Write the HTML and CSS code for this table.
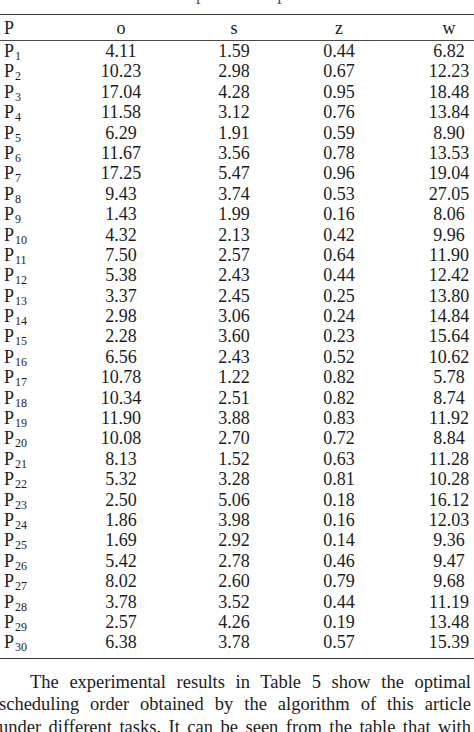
FILE: index.html
```html
<!DOCTYPE html>
<html>
<head>
<meta charset="utf-8">
<link rel="stylesheet" href="styles.css">
</head>
<body>
<div class="caption"><div class="caption-line">Table 4: Experimental parameters.</div></div>
<div class="table">
  <div class="row head"><div class="c0">P</div><div>o</div><div>s</div><div>z</div><div class="c4">w</div></div>
  <div class="body">
    <div class="row"><div class="c0">P<sub>1</sub></div><div>4.11</div><div>1.59</div><div>0.44</div><div class="c4">6.82</div></div>
    <div class="row"><div class="c0">P<sub>2</sub></div><div>10.23</div><div>2.98</div><div>0.67</div><div class="c4">12.23</div></div>
    <div class="row"><div class="c0">P<sub>3</sub></div><div>17.04</div><div>4.28</div><div>0.95</div><div class="c4">18.48</div></div>
    <div class="row"><div class="c0">P<sub>4</sub></div><div>11.58</div><div>3.12</div><div>0.76</div><div class="c4">13.84</div></div>
    <div class="row"><div class="c0">P<sub>5</sub></div><div>6.29</div><div>1.91</div><div>0.59</div><div class="c4">8.90</div></div>
    <div class="row"><div class="c0">P<sub>6</sub></div><div>11.67</div><div>3.56</div><div>0.78</div><div class="c4">13.53</div></div>
    <div class="row"><div class="c0">P<sub>7</sub></div><div>17.25</div><div>5.47</div><div>0.96</div><div class="c4">19.04</div></div>
    <div class="row"><div class="c0">P<sub>8</sub></div><div>9.43</div><div>3.74</div><div>0.53</div><div class="c4">27.05</div></div>
    <div class="row"><div class="c0">P<sub>9</sub></div><div>1.43</div><div>1.99</div><div>0.16</div><div class="c4">8.06</div></div>
    <div class="row"><div class="c0">P<sub>10</sub></div><div>4.32</div><div>2.13</div><div>0.42</div><div class="c4">9.96</div></div>
    <div class="row"><div class="c0">P<sub>11</sub></div><div>7.50</div><div>2.57</div><div>0.64</div><div class="c4">11.90</div></div>
    <div class="row"><div class="c0">P<sub>12</sub></div><div>5.38</div><div>2.43</div><div>0.44</div><div class="c4">12.42</div></div>
    <div class="row"><div class="c0">P<sub>13</sub></div><div>3.37</div><div>2.45</div><div>0.25</div><div class="c4">13.80</div></div>
    <div class="row"><div class="c0">P<sub>14</sub></div><div>2.98</div><div>3.06</div><div>0.24</div><div class="c4">14.84</div></div>
    <div class="row"><div class="c0">P<sub>15</sub></div><div>2.28</div><div>3.60</div><div>0.23</div><div class="c4">15.64</div></div>
    <div class="row"><div class="c0">P<sub>16</sub></div><div>6.56</div><div>2.43</div><div>0.52</div><div class="c4">10.62</div></div>
    <div class="row"><div class="c0">P<sub>17</sub></div><div>10.78</div><div>1.22</div><div>0.82</div><div class="c4">5.78</div></div>
    <div class="row"><div class="c0">P<sub>18</sub></div><div>10.34</div><div>2.51</div><div>0.82</div><div class="c4">8.74</div></div>
    <div class="row"><div class="c0">P<sub>19</sub></div><div>11.90</div><div>3.88</div><div>0.83</div><div class="c4">11.92</div></div>
    <div class="row"><div class="c0">P<sub>20</sub></div><div>10.08</div><div>2.70</div><div>0.72</div><div class="c4">8.84</div></div>
    <div class="row"><div class="c0">P<sub>21</sub></div><div>8.13</div><div>1.52</div><div>0.63</div><div class="c4">11.28</div></div>
    <div class="row"><div class="c0">P<sub>22</sub></div><div>5.32</div><div>3.28</div><div>0.81</div><div class="c4">10.28</div></div>
    <div class="row"><div class="c0">P<sub>23</sub></div><div>2.50</div><div>5.06</div><div>0.18</div><div class="c4">16.12</div></div>
    <div class="row"><div class="c0">P<sub>24</sub></div><div>1.86</div><div>3.98</div><div>0.16</div><div class="c4">12.03</div></div>
    <div class="row"><div class="c0">P<sub>25</sub></div><div>1.69</div><div>2.92</div><div>0.14</div><div class="c4">9.36</div></div>
    <div class="row"><div class="c0">P<sub>26</sub></div><div>5.42</div><div>2.78</div><div>0.46</div><div class="c4">9.47</div></div>
    <div class="row"><div class="c0">P<sub>27</sub></div><div>8.02</div><div>2.60</div><div>0.79</div><div class="c4">9.68</div></div>
    <div class="row"><div class="c0">P<sub>28</sub></div><div>3.78</div><div>3.52</div><div>0.44</div><div class="c4">11.19</div></div>
    <div class="row"><div class="c0">P<sub>29</sub></div><div>2.57</div><div>4.26</div><div>0.19</div><div class="c4">13.48</div></div>
    <div class="row"><div class="c0">P<sub>30</sub></div><div>6.38</div><div>3.78</div><div>0.57</div><div class="c4">15.39</div></div>
  </div>
</div>
<div class="para">
  <span class="line first">The experimental results in Table 5 show the optimal</span>
  <span class="line">scheduling order obtained by the algorithm of this article</span>
  <span class="line">under different tasks. It can be seen from the table that with</span>
</div>
</body>
</html>
```

FILE: styles.css
```css
html, body {
  margin: 0;
  padding: 0;
  background: #ffffff;
}
body {
  width: 474px;
  height: 732px;
  overflow: hidden;
  font-family: "Liberation Serif", "DejaVu Serif", serif;
  color: #1c1c1c;
}
.caption {
  height: 14px;
  overflow: hidden;
}
.caption-line {
  font-size: 18px;
  line-height: 20px;
  margin-top: -16.5px;
  text-align: center;
  color: #555;
}
.table {
  border-top: 1.5px solid #3a3a3a;
  border-bottom: 1.5px solid #3a3a3a;
  font-size: 18px;
}
.row {
  display: grid;
  grid-template-columns: 60px 122px 104px 106px 82px;
  height: 20.4px;
  line-height: 20.4px;
  text-align: center;
  white-space: nowrap;
}
.row.head {
  height: 25px;
  line-height: 26px;
  border-bottom: 1px solid #4a4a4a;
}
.row .c0 {
  text-align: left;
  padding-left: 4px;
}
.row .c4 {
  padding-left: 32px;
}
.row sub {
  font-size: 12px;
  line-height: 0;
  vertical-align: -3px;
  margin-left: 1px;
}
.body {
  padding-bottom: 5px;
}
.para {
  font-size: 18.5px;
  line-height: 22.5px;
  padding-top: 12px;
  margin-left: -1px;
  margin-right: 3px;
}
.line {
  display: block;
  text-align: justify;
  text-align-last: justify;
  white-space: nowrap;
}
.line.first {
  padding-left: 31px;
}
```
